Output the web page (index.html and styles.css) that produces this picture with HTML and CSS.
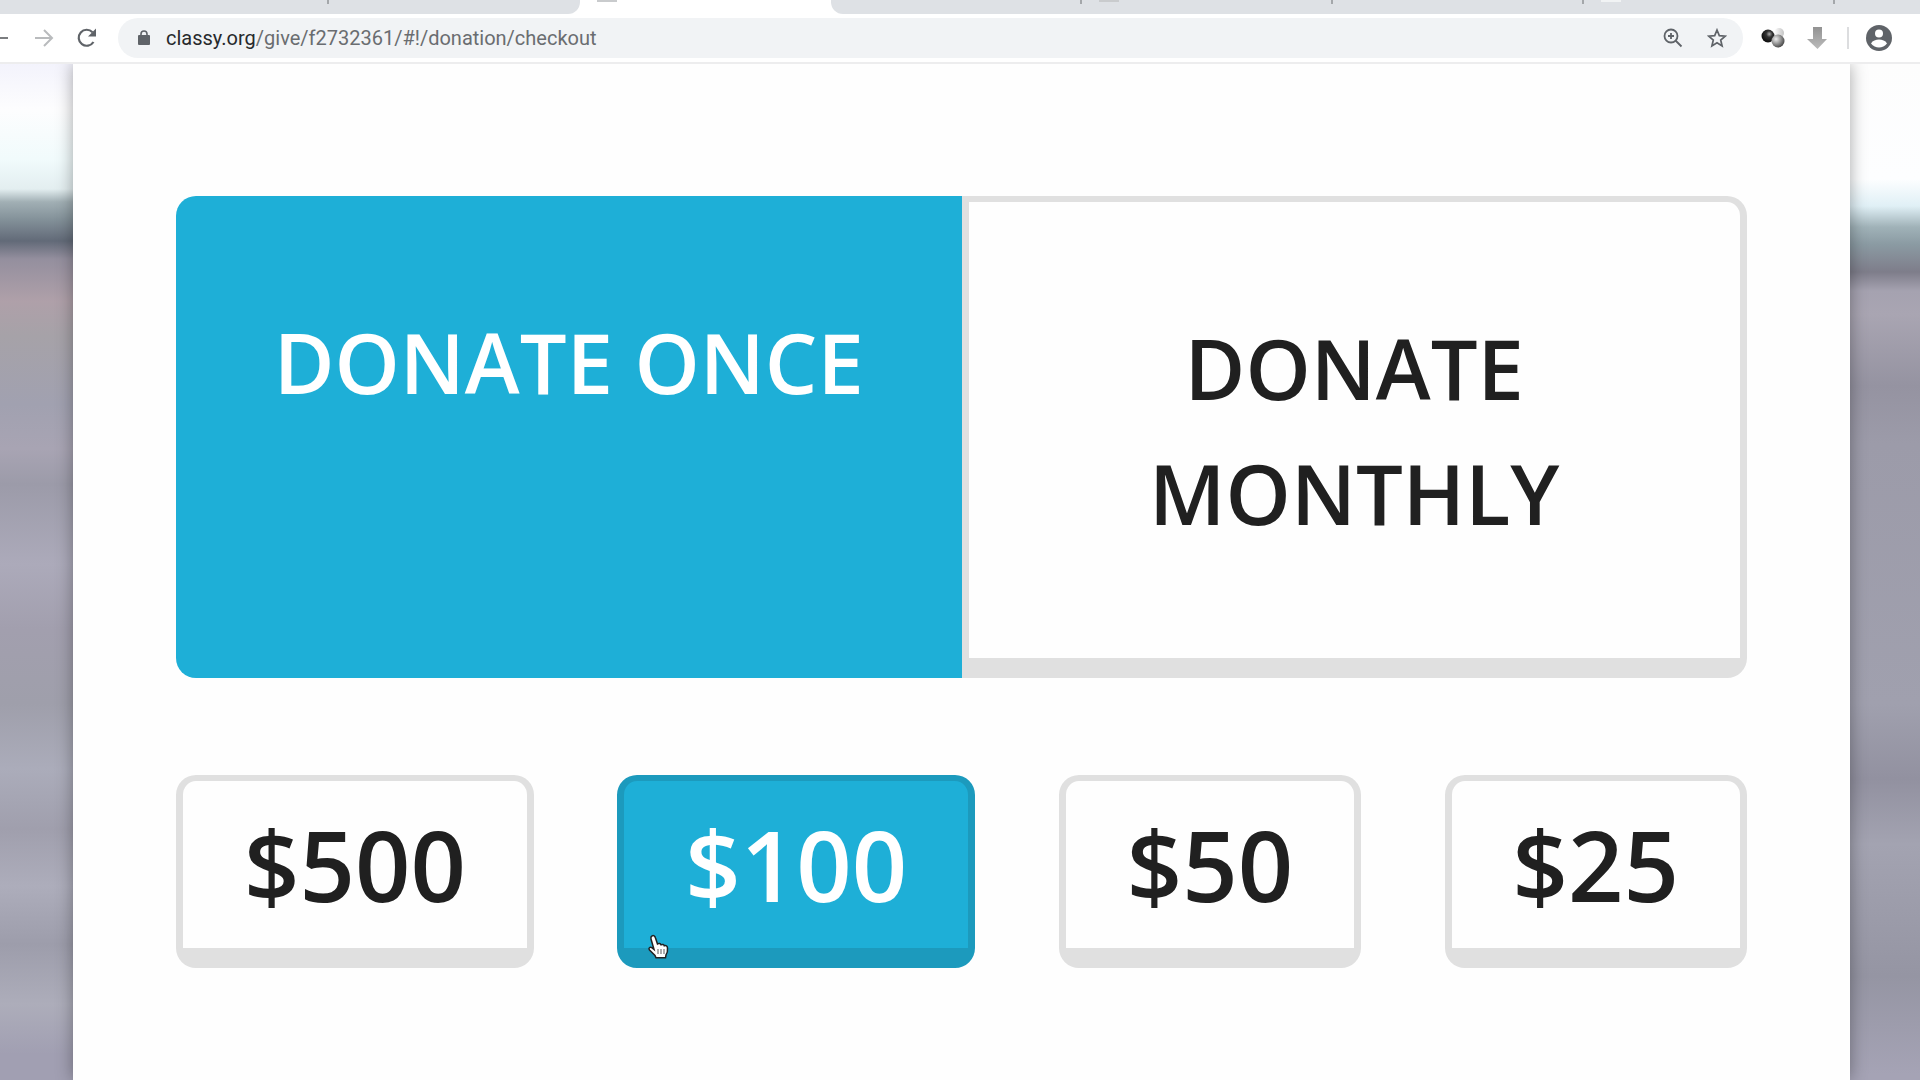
FILE: index.html
```html
<!DOCTYPE html>
<html lang="en">
<head>
    <meta charset="UTF-8">
    <meta name="viewport" content="width=device-width, initial-scale=1.0">
    <title>Donate</title>
    <link rel="stylesheet" href="styles.css">
</head>
<body>
    <header class="browser">
        <div class="tabs">
            <div class="tab first"></div>
            <div class="tab before"></div>
            <div class="tab active"><span class="favicon"></span></div>
            <div class="tab after"></div>
            <div class="tab"><span class="favicon"></span></div>
            <div class="tab"></div>
            <div class="tab"><span class="favicon light"></span></div>
            <div class="tab last"></div>
        </div>

        <div class="toolbar">
            <button class="icon back" aria-label="Back">
                <svg width="12" height="24" viewBox="0 0 12 24"><path d="M0 12H8" stroke="#7b7d80" stroke-width="2"/></svg>
            </button>
            <button class="icon forward" aria-label="Forward">
                <svg width="20" height="20" viewBox="0 0 20 20" fill="none" stroke="#b9bbbd" stroke-width="2"><path d="M1 10H18M10 2l8 8-8 8"/></svg>
            </button>
            <button class="icon reload" aria-label="Reload">
                <svg width="22" height="22" viewBox="0 0 22 22"><path d="M17.5 15A8 8 0 1 1 16.5 5.2" fill="none" stroke="#5f6368" stroke-width="2.2"/><path d="M20 1.5V9.500H12z" fill="#5f6368"/></svg>
            </button>

            <div class="address">
                <svg class="lock" width="12" height="16" viewBox="0 0 12 16"><path d="M3 7V4a3 3 0 0 1 6 0v3" fill="none" stroke="#5f6368" stroke-width="1.600"/><rect y="5" width="12" height="10" rx="1" fill="#5f6368"/></svg>
                <span class="url"><span class="host">classy.org</span>/give/f2732361/#!/donation/checkout</span>
                <button class="icon" aria-label="Zoom">
                    <svg width="20" height="20" viewBox="0 0 20 20" fill="none" stroke="#5f6368" stroke-width="1.800"><circle cx="8" cy="8" r="6.500"/><path d="M12.500 12.500l6 6M5 8h6M8 5v6"/></svg>
                </button>
                <button class="icon" aria-label="Bookmark">
                    <svg width="20" height="20" viewBox="0 0 20 20" fill="none" stroke="#5f6368" stroke-width="1.700"><path d="M10 2l2.300 5.600 6 .5-4.600 3.900 1.400 6L10 14.800 4.900 18l1.400-6L1.700 8.100l6-.5z"/></svg>
                </button>
            </div>

            <button class="icon" aria-label="Molecules">
                <svg width="24" height="22" viewBox="0 0 24 22">
                    <defs>
                        <radialGradient id="dark" cx=".6" cy=".35" r=".6"><stop offset="0" stop-color="#aaa"/><stop offset=".4" stop-color="#333"/><stop offset="1" stop-color="#111"/></radialGradient>
                        <radialGradient id="gray" cx=".35" cy=".35" r=".7"><stop offset="0" stop-color="#eee"/><stop offset=".5" stop-color="#999"/><stop offset="1" stop-color="#444"/></radialGradient>
                        <linearGradient id="pale"><stop offset="0" stop-color="#fff"/><stop offset="1" stop-color="#c4c4c4"/></linearGradient>
                    </defs>
                    <circle cx="18" cy="6" r="5" fill="url(#pale)"/>
                    <circle cx="7" cy="9" r="6.500" fill="url(#dark)"/>
                    <circle cx="17" cy="14" r="6.500" fill="url(#gray)"/>
                </svg>
            </button>
            <button class="icon" aria-label="Download">
                <svg width="20" height="24" viewBox="0 0 20 24"><defs><linearGradient id="down" x2="0" y2="1"><stop offset="0" stop-color="#929292"/><stop offset="1" stop-color="#bbb"/></linearGradient></defs><path d="M6 1h9v12h5L10.500 23 0 13h6z" fill="url(#down)"/></svg>
            </button>
            <span class="divider"></span>
            <button class="icon" aria-label="Profile">
                <svg width="26" height="26" viewBox="0 0 26 26"><circle cx="13" cy="13" r="13" fill="#5f6368"/><circle cx="13" cy="8.500" r="4" fill="#fff"/><path d="M5 18.500c1.500-3 5-4 8-4s6.500 1 8 4c-2 2.800-5 4-8 4s-6-1.200-8-4z" fill="#fff"/></svg>
            </button>
        </div>
    </header>

    <main class="page">
        <form class="card">
            <div class="frequency">
                <button type="button" class="once">DONATE ONCE</button>
                <button type="button" class="monthly">DONATE MONTHLY</button>
            </div>

            <div class="amounts">
                <button type="button" class="amount">$500</button>
                <button type="button" class="amount selected">$100
                    <svg class="pointer" width="22" height="26" viewBox="0 0 22 26"><path d="M5 2c1.500-1 3 0 3.500 2l2 6c1.500-1 3-.5 3.500.8 1.500-.8 3-.2 3.300 1 1.700-.6 3 .3 3.200 2 .3 3-.2 5-1.500 7l-.5 3H9l-1-2.300-5.500-5.500c-1.500-1.800.5-3.500 2.300-2.300L7 15.500 4 5c-.4-1.400 0-2.400 1-3z" fill="#fff" stroke="#222" stroke-width="1.500"/><path d="M11 15v5M14 15v5M17 15v5" stroke="#777" stroke-width="1.200"/></svg>
                </button>
                <button type="button" class="amount">$50</button>
                <button type="button" class="amount">$25</button>
            </div>
        </form>
    </main>
</body>
</html>
```

FILE: styles.css
```css
* {
    box-sizing: border-box;
}

body {
    margin: 0;
    min-height: 100vh;
    display: flex;
    flex-direction: column;
    font-family: "Open Sans", sans-serif;
    color: #202020;
}

button {
    margin: 0;
    font-family: inherit;
    color: inherit;
    cursor: pointer;
}

/* browser bar */
.browser {
    background-color: white;
    border-bottom: 2px solid #ededee;
    overflow: hidden;
}

.tabs {
    display: flex;
    height: 14px;
}

.tab {
    flex: 0 0 251px;
    display: flex;
    align-items: flex-start;
    background-color: #dee1e5;
}

.tab::after {
    content: "";
    width: 2px;
    height: 4px;
    margin-left: auto;
    background-color: #a4a7aa;
}

.first {
    flex-basis: 329px;
}

.before {
    border-bottom-right-radius: 12px;
}

.after {
    border-bottom-left-radius: 12px;
}

.active {
    background-color: white;
}

.last {
    flex: 1;
}

.before::after,
.active::after,
.last::after {
    display: none;
}

.favicon {
    width: 20px;
    height: 2px;
    margin-left: 17px;
    background-color: #c9cbcd;
}

.light {
    background-color: #f1f3f4;
}

.toolbar {
    display: flex;
    align-items: center;
    gap: 22px;
    height: 48px;
    padding-right: 28px;
}

.icon {
    display: flex;
    padding: 0;
    border: none;
    background: none;
}

.address {
    flex: 1;
    display: flex;
    align-items: center;
    gap: 24px;
    height: 40px;
    margin: 0 -4px 0 -2px;
    padding: 0 16px 0 20px;
    border-radius: 20px;
    background-color: #f1f3f5;
}

.lock {
    margin-right: -8px;
}

.url {
    flex: 1;
    font-family: Roboto, sans-serif;
    font-size: 20px;
    color: #6a6d70;
}

.host {
    color: #27292c;
}

.divider {
    width: 2px;
    height: 22px;
    margin: 0 -5px 0 -2px;
    background-color: #dcdddf;
}

/* blurred street photo showing on both sides of the card */
.page {
    flex: 1;
    display: flex;
    background-image:
        linear-gradient(#f3f3fc, #fdfdfe 45px, #f1fbfc 95px, #e3eef0 125px, #a1afb4 138px, #84929a 155px, #626a78 177px, #948f9e 195px, #afa0a9 237px, #a6a2a8 272px, #a1a1b0 340px, #a8a4b3 385px, #9c9ba9 420px, #acaaba 500px, #a29fae 565px, #9f9fab 640px, #abacba 705px, #a09fad 765px, #adadbb 822px, #9d9dab 880px, #adadba 940px, #a19fb2 990px),
        linear-gradient(#fdfdfd, #fdfeff 115px, #e0f0f6 142px, #a0b2b8 163px, #8b9ba3 180px, #7e7d8a 208px, #a5a2b0 227px, #a9a5b2 250px, #9593a1 322px, #9c9ba9 380px, #a0a0ae 640px, #9291a0 715px, #a3a3b1 780px, #9595a3 912px, #a5a3b5 1010px);
    background-size: 50% 100%;
    background-position: left top, right top;
    background-repeat: no-repeat;
    overflow: hidden;
}

.card {
    flex: 1;
    margin: 0 70px 0 73px;
    padding: 132px 103px 110px;
    background-color: #fefefe;
    box-shadow: 0 0 16px rgba(0, 0, 0, .35);
}

.frequency {
    display: grid;
    grid-template-columns: 1fr 1fr;
    margin-bottom: 97px;
}

.once,
.monthly {
    display: flex;
    align-items: flex-start;
    justify-content: center;
    padding: 103px 90px;
    font-size: 83px;
    font-weight: 600;
    line-height: 125px;
}

.once {
    border: none;
    border-radius: 20px 0 0 20px;
    background-color: #1eafd7;
    color: white;
}

.monthly {
    border: 7px solid #e0e0e0;
    border-top-width: 6px;
    border-bottom-width: 20px;
    border-radius: 0 20px 20px 0;
    background-color: #fefefe;
}

.amounts {
    display: flex;
    justify-content: space-between;
}

.amount {
    position: relative;
    padding: 11px 61px;
    border: 7px solid #e0e0e0;
    border-top-width: 6px;
    border-bottom-width: 20px;
    border-radius: 20px;
    background-color: #fefefe;
    font-size: 97px;
    font-weight: 600;
    line-height: 145px;
}

.selected {
    border-color: #1c9abd;
    background-color: #1eafd7;
    color: white;
}

.pointer {
    position: absolute;
    left: 23px;
    bottom: -12px;
}
```
